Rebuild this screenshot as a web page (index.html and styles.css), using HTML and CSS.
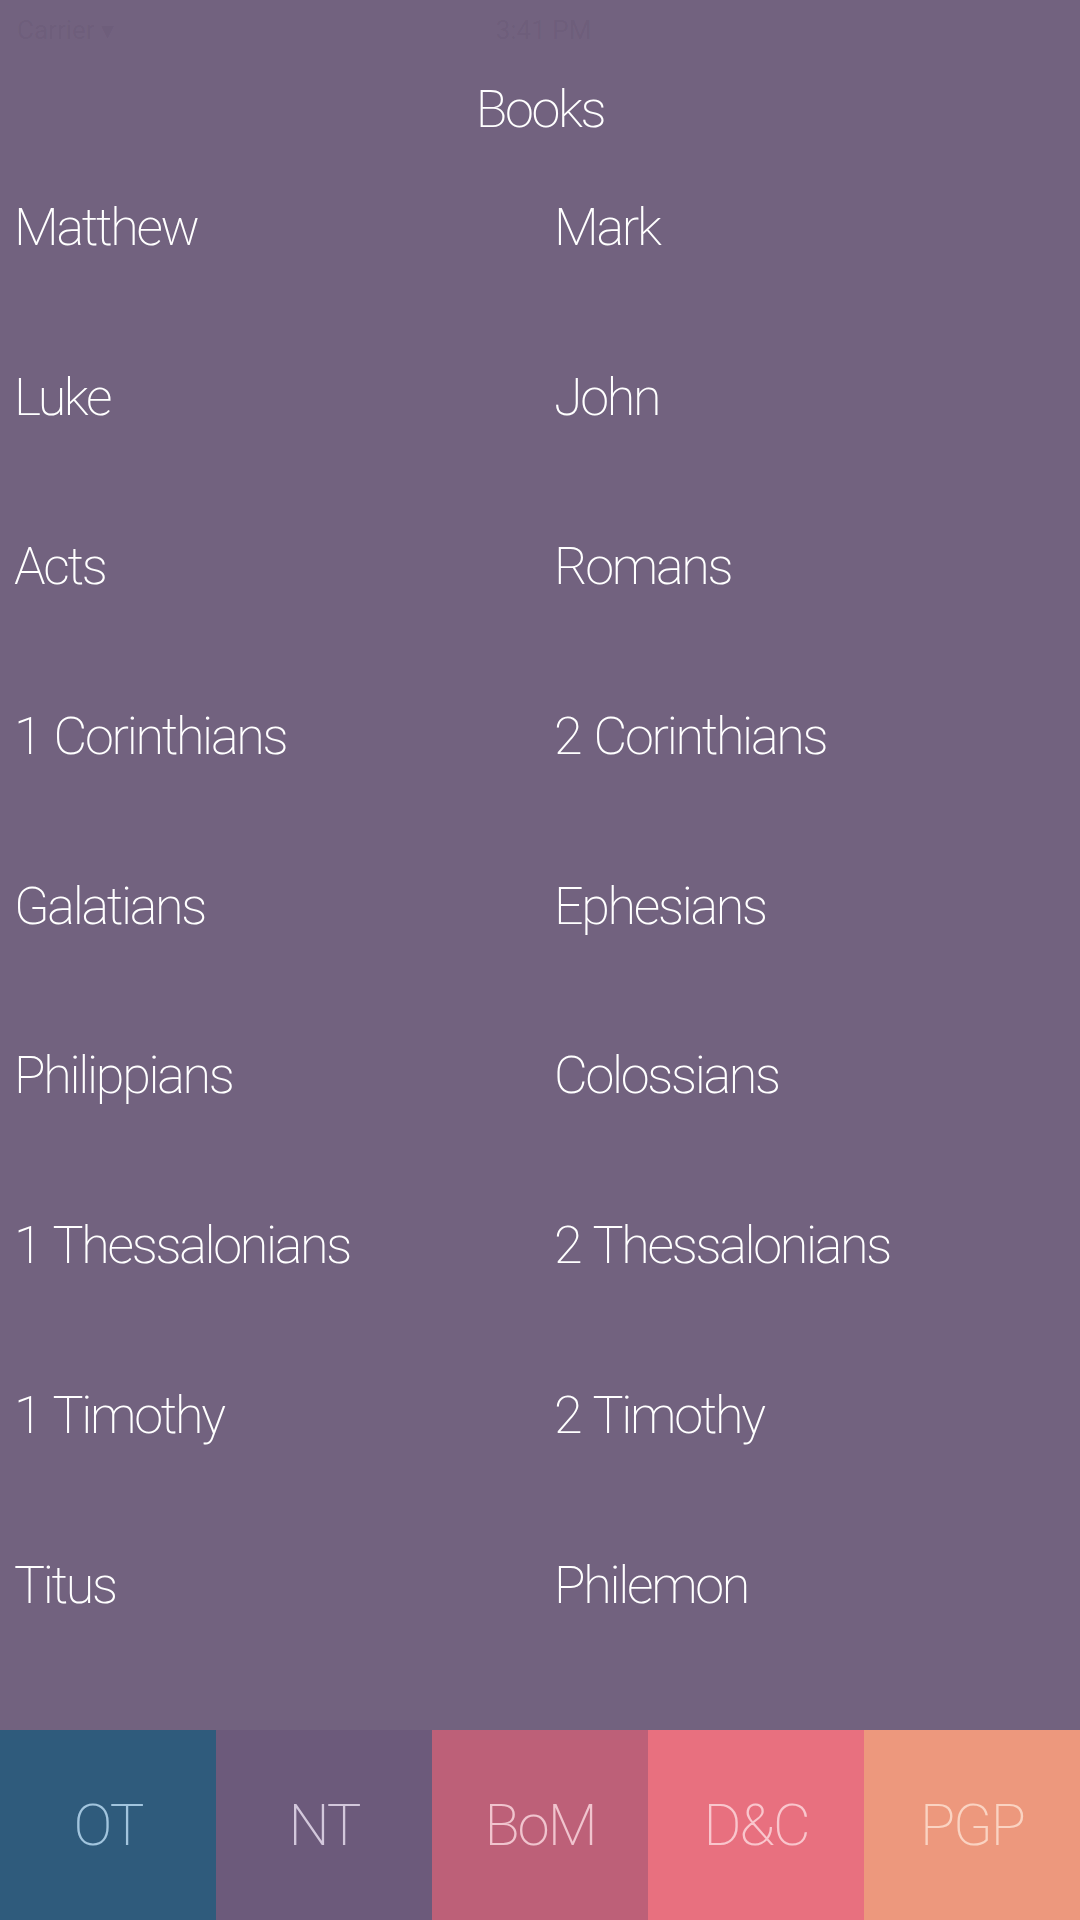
FILE: index.html
```html
<!DOCTYPE html>
<html lang="en">
<head>
<meta charset="utf-8">
<title>Books</title>
<link rel="stylesheet" href="styles.css">
</head>
<body>
<div class="screen">
  <div class="status">
    <span class="carrier">Carrier &#x25BE;</span>
    <span class="clock">3:41 PM</span>
    <span class="spacer"></span>
  </div>
  <h1 class="title">Books</h1>
  <div class="list">
    <div class="book">Matthew</div><div class="book">Mark</div>
    <div class="book">Luke</div><div class="book">John</div>
    <div class="book">Acts</div><div class="book">Romans</div>
    <div class="book">1 Corinthians</div><div class="book">2 Corinthians</div>
    <div class="book">Galatians</div><div class="book">Ephesians</div>
    <div class="book">Philippians</div><div class="book">Colossians</div>
    <div class="book">1 Thessalonians</div><div class="book">2 Thessalonians</div>
    <div class="book">1 Timothy</div><div class="book">2 Timothy</div>
    <div class="book">Titus</div><div class="book">Philemon</div>
  </div>
  <nav class="tabs">
    <div class="tab tab-ot">OT</div>
    <div class="tab tab-nt">NT</div>
    <div class="tab tab-bom">BoM</div>
    <div class="tab tab-dc">D&amp;C</div>
    <div class="tab tab-pgp">PGP</div>
  </nav>
</div>
</body>
</html>
```
FILE: styles.css
```css
html, body {
  margin: 0;
  padding: 0;
  background: #72627f;
}
.screen {
  width: 1080px;
  height: 1920px;
  display: flex;
  flex-direction: column;
  background: #72627f;
  font-family: Roboto, Inter, "Liberation Sans", sans-serif;
  font-weight: 200;
  font-variant-ligatures: none;
  color: #ffffff;
  overflow: hidden;
}
.status {
  height: 60px;
  display: flex;
  align-items: center;
  justify-content: space-between;
  padding: 0 17px;
  font-size: 26px;
  color: rgba(0, 0, 0, 0.05);
  font-weight: 400;
}
.status .spacer { width: 90px; }
.title {
  margin: 20px 0 0 0;
  font-size: 52px;
  line-height: 60px;
  font-weight: 200;
  letter-spacing: -2.3px;
  text-align: center;
}
.list {
  margin-top: 58px;
  flex: 1;
  display: grid;
  grid-template-columns: 540px 540px;
  grid-auto-rows: 169.7px;
  align-content: start;
}
.book {
  padding-left: 14px;
  font-size: 52px;
  line-height: 60px;
  letter-spacing: -2.3px;
  word-spacing: 3px;
  white-space: nowrap;
}
.tabs {
  height: 190px;
  display: grid;
  grid-template-columns: repeat(5, 216px);
  box-shadow: inset 0 1px 0 rgba(0, 0, 0, 0.12);
}
.tab {
  display: flex;
  align-items: center;
  justify-content: center;
  font-size: 58px;
  font-weight: 200;
  letter-spacing: -2px;
}
.tab-ot { background: #2f5b7c; color: #a2c5de; }
.tab-nt { background: #6c5a7b; color: #d3c8dc; }
.tab-bom { background: #bd6078; color: #f0c4ce; }
.tab-dc { background: #e8707f; color: #f9c6cd; }
.tab-pgp { background: #ed987d; color: #fad3c2; }
```
